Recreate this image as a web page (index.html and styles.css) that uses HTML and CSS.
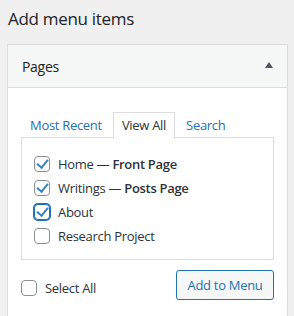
FILE: index.html
```html
<!DOCTYPE html>
<html>
<head>
<meta charset="utf-8">
<link rel="stylesheet" href="styles.css">
</head>
<body>
<h2 class="title">Add menu items</h2>
<div class="panel">
  <div class="panel-head">
    <h3 class="panel-title">Pages</h3>
    <span class="toggle"></span>
  </div>
  <div class="panel-body">
    <ul class="tabs">
      <li class="tab">Most Recent</li>
      <li class="tab active">View All</li>
      <li class="tab">Search</li>
    </ul>
    <div class="tab-panel">
      <label class="row"><span class="cb checked"></span><span>Home — <b>Front Page</b></span></label>
      <label class="row"><span class="cb checked"></span><span>Writings — <b>Posts Page</b></span></label>
      <label class="row"><span class="cb checked focus"></span><span>About</span></label>
      <label class="row"><span class="cb"></span><span>Research Project</span></label>
    </div>
    <div class="actions">
      <label class="select-all"><span class="cb"></span><span>Select All</span></label>
      <button class="btn">Add to Menu</button>
    </div>
  </div>
</div>
</body>
</html>
```
FILE: styles.css
```css
* { box-sizing: border-box; }
body {
  margin: 0;
  background: #f0f0f1;
  font-family: "Open Sans", "Noto Sans", sans-serif;
  color: #3c434a;
  font-size: 13px;
  letter-spacing: -0.3px;
  width: 294px;
  height: 316px;
  overflow: hidden;
}
.title {
  margin: 0;
  padding: 6px 0 0 8px;
  height: 44px;
  font-size: 17px;
  font-weight: 400;
  color: #1d2327;
  line-height: 26px;
}
.panel {
  margin-left: 7px;
  width: 281px;
  border: 1px solid #dcdcde;
  border-bottom: none;
  background: #fff;
  height: 272px;
}
.panel-head {
  height: 43px;
  background: #f6f7f7;
  border-bottom: 1px solid #dcdcde;
  display: flex;
  align-items: center;
  justify-content: space-between;
  padding: 0 14px 0 14px;
}
.panel-title {
  margin: 0;
  font-size: 14px;
  font-weight: 400;
  color: #1d2327;
}
.toggle {
  width: 0;
  height: 0;
  border-left: 4px solid transparent;
  border-right: 4px solid transparent;
  border-bottom: 6px solid #50575e;
  margin-top: -2px;
}
.panel-body {
  padding: 24px 13px 0 13px;
}
.tabs {
  list-style: none;
  margin: 0;
  padding: 0;
  display: flex;
  gap: 2px;
}
.tab {
  padding: 0 8px;
  height: 25px;
  line-height: 25px;
  border: 1px solid transparent;
  border-bottom: none;
  color: #2271b1;
  font-size: 13px;
}
.tab.active {
  border-color: #dcdcde;
  color: #2c3338;
  background: #fff;
  position: relative;
  margin-bottom: -1px;
  height: 26px;
}
.tab-panel {
  border: 1px solid #dcdcde;
  padding: 14px 12px 10px 12px;
  height: 123px;
}
.row, .select-all {
  display: flex;
  align-items: center;
  gap: 8px;
  height: 24px;
  color: #2c3338;
  font-size: 13px;
}
.row b { font-weight: 600; }
.cb {
  width: 16px;
  height: 16px;
  border: 1px solid #8c8f94;
  border-radius: 4px;
  background: #fff;
  flex: none;
  position: relative;
}
.cb.checked::after {
  content: "";
  position: absolute;
  left: 4px;
  top: 0px;
  width: 5px;
  height: 9px;
  border-right: 2.5px solid #3582c4;
  border-bottom: 2.5px solid #3582c4;
  transform: rotate(40deg);
}
.cb.focus {
  border-color: #2271b1;
  box-shadow: 0 0 0 1px #2271b1;
}
.actions {
  display: flex;
  justify-content: space-between;
  align-items: flex-start;
  margin-top: 10px;
}
.select-all { margin-top: 6px; }
.btn {
  width: 98px;
  height: 30px;
  border: 1px solid #2271b1;
  border-radius: 3px;
  background: #f6f7f7;
  color: #2271b1;
  font-family: inherit;
  letter-spacing: -0.3px;
  font-size: 13px;
  padding: 0;
}
```
